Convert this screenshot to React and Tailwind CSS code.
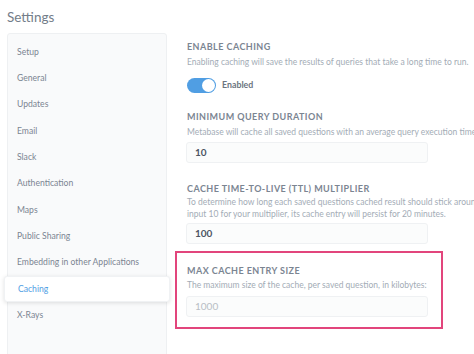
import React from "react";

const items = [
  "Setup",
  "General",
  "Updates",
  "Email",
  "Slack",
  "Authentication",
  "Maps",
  "Public Sharing",
  "Embedding in other Applications",
  "Caching",
  "X-Rays",
];

function Heading({ children }) {
  return (
    <div className="h-[12px] leading-[12px] text-[9px] font-bold uppercase tracking-[0.45px] text-[#7b8592] whitespace-nowrap">
      {children}
    </div>
  );
}

function Desc({ children, className = "" }) {
  return (
    <div className={"text-[8.5px] leading-[11.5px] text-[#a3acb6] whitespace-nowrap " + className}>
      {children}
    </div>
  );
}

function Input({ value, muted }) {
  return (
    <div
      className={
        "w-[242px] h-[21px] -ml-[1px] rounded-[3px] border border-[#eff1f3] bg-[#fbfcfc] flex items-center pl-[8px] text-[10px] " +
        (muted ? "text-[#b8bec5]" : "text-[#4c5563] font-bold")
      }
    >
      {value}
    </div>
  );
}

export default function App() {
  return (
    <div
      className="w-[474px] h-[354px] bg-white overflow-hidden relative"
      style={{ fontFamily: "Lato, 'Open Sans', sans-serif" }}
    >
      <div className="pl-[7px] pt-[8px] h-[33px] text-[13.5px] leading-[18px] text-[#737d89]">
        Settings
      </div>
      <div className="flex">
        <div className="ml-[7px] w-[160px] h-[330px] shrink-0 bg-[#f9fafb] border border-[#eef0f2] rounded-[3px] pt-[5px]">
          {items.map((it) => (
            <div
              key={it}
              className={
                it === "Caching"
                  ? "h-[26.33px] -mx-[4px] pl-[13px] flex items-center text-[8.6px] text-[#509ee3] bg-white rounded-[3px] shadow-[0_1px_4px_rgba(0,0,0,0.12)] border border-[#f0f2f4]"
                  : "h-[26.33px] pl-[9px] flex items-center text-[8.6px] text-[#7b8592] whitespace-nowrap"
              }
            >
              {it}
            </div>
          ))}
        </div>
        <div className="ml-[20px] pt-[8px] flex flex-col">
          <Heading>Enable Caching</Heading>
          <Desc className="mt-[4px]">
            Enabling caching will save the results of queries that take a long time to run.
          </Desc>
          <div className="mt-[9px] flex items-center">
            <div className="w-[29px] h-[15px] rounded-full bg-[#509ee3] relative">
              <div className="absolute right-[1px] top-[1px] w-[13px] h-[13px] rounded-full bg-white"></div>
            </div>
            <span className="ml-[6px] text-[8.8px] font-bold text-[#6b7580]">Enabled</span>
          </div>

          <div className="mt-[18px]">
            <Heading>Minimum Query Duration</Heading>
          </div>
          <Desc className="mt-[4px]">
            Metabase will cache all saved questions with an average query execution time greater than this many seconds:
          </Desc>
          <div className="mt-[4px]">
            <Input value="10" />
          </div>

          <div className="mt-[20px]">
            <Heading>Cache Time-To-Live (TTL) Multiplier</Heading>
          </div>
          <Desc className="mt-[2px]">
            To determine how long each saved questions cached result should stick around, we take the query's average execution time and multiply that by whatever you
          </Desc>
          <Desc>input 10 for your multiplier, its cache entry will persist for 20 minutes.</Desc>
          <div className="mt-[3px]">
            <Input value="100" />
          </div>

          <div className="mt-[7px] -ml-[12px] w-[268px] border-2 border-[#e2457c] pl-[10px] pt-[12px] pb-[10px]">
            <Heading>Max Cache Entry Size</Heading>
            <Desc className="mt-[3px]">
              The maximum size of the cache, per saved question, in kilobytes:
            </Desc>
            <div className="mt-[4px]">
              <Input value="1000" muted />
            </div>
          </div>
        </div>
      </div>
    </div>
  );
}
